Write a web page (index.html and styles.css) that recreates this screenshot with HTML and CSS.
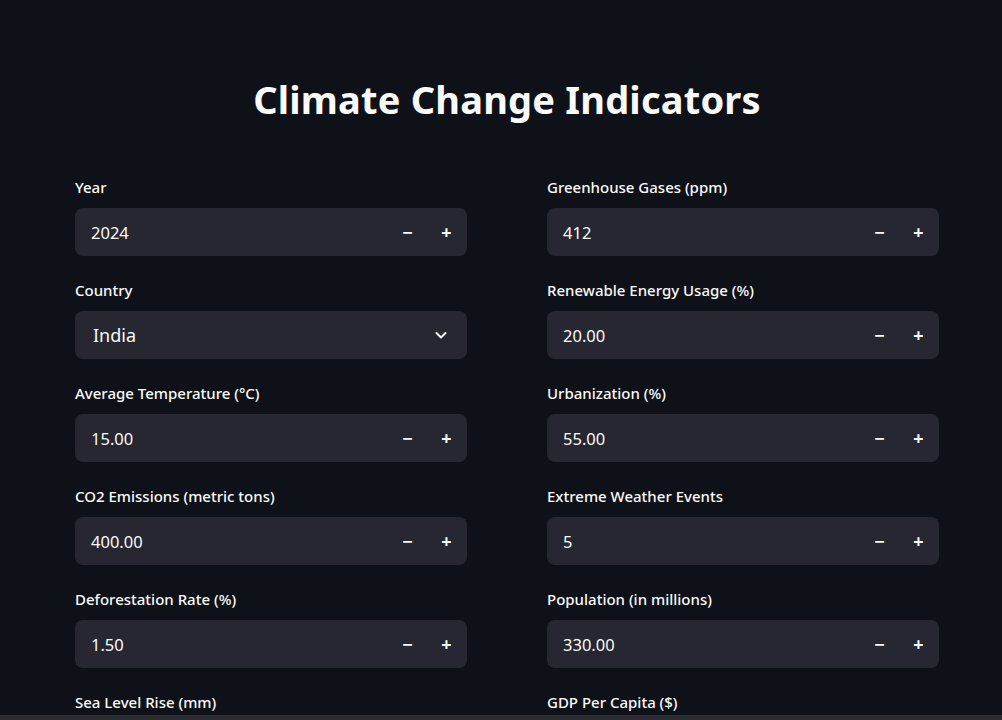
FILE: index.html
```html
<!DOCTYPE html>
<html>

<head>
    <meta name="viewport" content="width=device-width, initial-scale=1">
    <title>Climate Change Indicators</title>
    <link rel="stylesheet" href="styles.css">
</head>

<body>
    <div class="main">
        <h1 class="title">Climate Change Indicators</h1>

        <div class="form-grid">
            <div class="field">
                <label>Year</label>
                <div class="number-input">
                    <span class="value">2024</span>
                    <span class="step">&minus;</span>
                    <span class="step">+</span>
                </div>
            </div>
            <div class="field">
                <label>Greenhouse Gases (ppm)</label>
                <div class="number-input">
                    <span class="value">412</span>
                    <span class="step">&minus;</span>
                    <span class="step">+</span>
                </div>
            </div>

            <div class="field">
                <label>Country</label>
                <div class="select-input">
                    <span class="value">India</span>
                    <svg class="chevron" width="16" height="16" viewBox="0 0 16 16">
                        <path d="M3.5 6l4.5 4.5 4.5-4.5" fill="none" stroke="#fafafa" stroke-width="2" stroke-linecap="round" stroke-linejoin="round" />
                    </svg>
                </div>
            </div>
            <div class="field">
                <label>Renewable Energy Usage (%)</label>
                <div class="number-input">
                    <span class="value">20.00</span>
                    <span class="step">&minus;</span>
                    <span class="step">+</span>
                </div>
            </div>

            <div class="field">
                <label>Average Temperature (°C)</label>
                <div class="number-input">
                    <span class="value">15.00</span>
                    <span class="step">&minus;</span>
                    <span class="step">+</span>
                </div>
            </div>
            <div class="field">
                <label>Urbanization (%)</label>
                <div class="number-input">
                    <span class="value">55.00</span>
                    <span class="step">&minus;</span>
                    <span class="step">+</span>
                </div>
            </div>

            <div class="field">
                <label>CO2 Emissions (metric tons)</label>
                <div class="number-input">
                    <span class="value">400.00</span>
                    <span class="step">&minus;</span>
                    <span class="step">+</span>
                </div>
            </div>
            <div class="field">
                <label>Extreme Weather Events</label>
                <div class="number-input">
                    <span class="value">5</span>
                    <span class="step">&minus;</span>
                    <span class="step">+</span>
                </div>
            </div>

            <div class="field">
                <label>Deforestation Rate (%)</label>
                <div class="number-input">
                    <span class="value">1.50</span>
                    <span class="step">&minus;</span>
                    <span class="step">+</span>
                </div>
            </div>
            <div class="field">
                <label>Population (in millions)</label>
                <div class="number-input">
                    <span class="value">330.00</span>
                    <span class="step">&minus;</span>
                    <span class="step">+</span>
                </div>
            </div>

            <!-- last row: only the labels fit in the window -->
            <div class="field">
                <label>Sea Level Rise (mm)</label>
            </div>
            <div class="field">
                <label>GDP Per Capita ($)</label>
            </div>
        </div>
    </div>

    <div class="bottom-edge"></div>
</body>

</html>
```

FILE: styles.css
```css
html,
body {
    margin: 0;
    height: 100%;
    overflow: hidden;
    background-color: #0e1117;
    color: #fafafa;
    font-family: "Noto Sans", sans-serif;
}

.main {
    width: 864px;
    padding: 0 0 0 75px;
}

.title {
    margin: 0;
    padding: 75px 0 54px 0;
    text-align: center;
    font-size: 38px;
    font-weight: 700;
    line-height: 48px;
    letter-spacing: 0.2px;
}

.form-grid {
    display: grid;
    grid-template-columns: 392px 392px;
    column-gap: 80px;
}

.field {
    display: flex;
    flex-direction: column;
    padding-bottom: 24px;
}

.field label {
    font-size: 15px;
    font-weight: 500;
    line-height: 20px;
    height: 20px;
    margin-bottom: 11px;
}

.number-input,
.select-input {
    display: flex;
    align-items: center;
    height: 48px;
    background-color: #262730;
    border-radius: 8px;
}

.number-input .value {
    flex: 1;
    padding-left: 16px;
    font-size: 16.5px;
}

.step {
    width: 39px;
    text-align: center;
    font-size: 18px;
    font-weight: 700;
}

.step:last-child {
    margin-right: 1px;
}

.select-input .value {
    flex: 1;
    padding-left: 18px;
    font-size: 18px;
}

.chevron {
    margin-right: 18px;
}

.bottom-edge {
    position: fixed;
    left: 0;
    right: 0;
    bottom: 0;
    height: 5px;
    background-color: #2b2d33;
}
```
